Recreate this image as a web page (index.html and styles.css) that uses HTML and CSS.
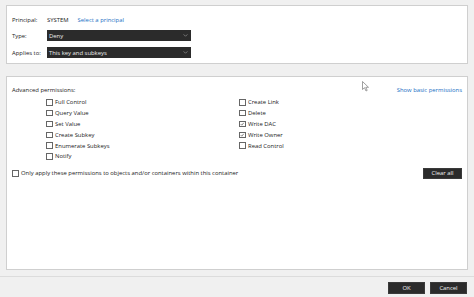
FILE: index.html
```html
<!DOCTYPE html>
<html>
<head>
<meta charset="utf-8">
<link rel="stylesheet" href="styles.css">
</head>
<body>
<div class="dialog">
  <section class="panel top">
    <div class="row principal">
      <span class="lbl">Principal:</span>
      <span class="sys">SYSTEM</span>
      <a class="link">Select a principal</a>
    </div>
    <div class="row sel-row">
      <span class="lbl">Type:</span>
      <div class="select"><span>Deny</span><svg class="chev" viewBox="0 0 6 4" width="5" height="3"><path d="M0.5 0.5 L3 3 L5.5 0.5" fill="none" stroke="#aaa" stroke-width="0.8"/></svg></div>
    </div>
    <div class="row sel-row second">
      <span class="lbl">Applies to:</span>
      <div class="select"><span>This key and subkeys</span><svg class="chev" viewBox="0 0 6 4" width="5" height="3"><path d="M0.5 0.5 L3 3 L5.5 0.5" fill="none" stroke="#aaa" stroke-width="0.8"/></svg></div>
    </div>
  </section>

  <section class="panel perms">
    <div class="perm-head">
      <span>Advanced permissions:</span>
      <a class="link">Show basic permissions</a>
    </div>
    <div class="grid">
      <div class="col left">
        <label class="cb"><span class="box"></span>Full Control</label>
        <label class="cb"><span class="box"></span>Query Value</label>
        <label class="cb"><span class="box"></span>Set Value</label>
        <label class="cb"><span class="box"></span>Create Subkey</label>
        <label class="cb"><span class="box"></span>Enumerate Subkeys</label>
        <label class="cb"><span class="box"></span>Notify</label>
      </div>
      <div class="col right">
        <label class="cb"><span class="box"></span>Create Link</label>
        <label class="cb"><span class="box"></span>Delete</label>
        <label class="cb"><span class="box checked"><svg viewBox="0 0 6 6" width="6" height="6"><path d="M1 3.2 L2.4 4.6 L5 1.4" fill="none" stroke="#333" stroke-width="0.8"/></svg></span>Write DAC</label>
        <label class="cb"><span class="box checked"><svg viewBox="0 0 6 6" width="6" height="6"><path d="M1 3.2 L2.4 4.6 L5 1.4" fill="none" stroke="#333" stroke-width="0.8"/></svg></span>Write Owner</label>
        <label class="cb"><span class="box"></span>Read Control</label>
      </div>
    </div>
    <div class="apply-row">
      <label class="cb"><span class="box"></span>Only apply these permissions to objects and/or containers within this container</label>
      <button class="btn">Clear all</button>
    </div>
    <svg class="cursor" viewBox="0 0 8 11" width="8" height="11"><path d="M0.5 0.5 L0.5 8.5 L2.5 6.7 L4 10 L5.2 9.4 L3.8 6.3 L6.5 6.3 Z" fill="#fff" stroke="#777" stroke-width="0.7"/></svg>
  </section>

  <footer class="footer">
    <button class="btn foot">OK</button>
    <button class="btn foot">Cancel</button>
  </footer>
</div>
</body>
</html>
```

FILE: styles.css
```css
* { box-sizing: border-box; }
html, body {
  margin: 0;
  padding: 0;
  width: 474px;
  height: 297px;
  overflow: hidden;
  background: #f0f0f0;
  font-family: "Open Sans", "Noto Sans", sans-serif;
  font-size: 5.9px;
  color: #222;
}
.dialog {
  display: flex;
  flex-direction: column;
  height: 297px;
  padding: 5px 6px 0 6px;
}
.panel {
  background: #fff;
  border: 1px solid #cfcfcf;
  position: relative;
}
.top {
  height: 59px;
  padding: 8px 0 0 5px;
}
.row {
  display: flex;
  align-items: center;
  height: 11px;
}
.lbl {
  width: 35px;
  flex: none;
}
.sys { margin-right: 9px; }
.link { color: #1a6fc4; cursor: pointer; }
.sel-row { margin-top: 5px; }
.sel-row.second { margin-top: 6px; }
.select {
  width: 144px;
  height: 11px;
  background: #2b2b2b;
  color: #eee;
  display: flex;
  align-items: center;
  justify-content: space-between;
  padding: 0 3px 0 2px;
}
.chev { display: block; }
.perms {
  margin-top: 12px;
  height: 194px;
  padding: 8px 5px 0 5px;
}
.perm-head {
  display: flex;
  justify-content: space-between;
  align-items: center;
  height: 10px;
}
.grid {
  display: flex;
  margin-top: 2px;
  padding-left: 34px;
}
.col { display: flex; flex-direction: column; }
.col.left { width: 193px; }
.cb {
  display: flex;
  align-items: center;
  height: 10.8px;
  white-space: nowrap;
}
.box {
  width: 6.5px;
  height: 6.5px;
  border: 1px solid #666;
  margin-right: 2.5px;
  flex: none;
  display: flex;
  align-items: center;
  justify-content: center;
  background: #fff;
}
.box svg { display: block; }
.apply-row {
  display: flex;
  justify-content: space-between;
  align-items: center;
  margin-top: 6px;
}
.btn {
  font-family: inherit;
  font-size: 5.9px;
  background: #2b2b2b;
  color: #f2f2f2;
  border: 1px solid #3a3a3a;
  height: 11px;
  width: 39px;
  padding: 0;
  line-height: 9px;
}
.cursor {
  position: absolute;
  left: 355px;
  top: 4px;
}
.footer {
  margin-top: 6px;
  margin-left: -6px;
  margin-right: -6px;
  flex: 1;
  border-top: 1px solid #dcdcdc;
  display: flex;
  justify-content: flex-end;
  align-items: flex-start;
  gap: 5px;
  padding: 5px 7px 0 0;
}
.btn.foot { width: 37px; height: 12px; }
```
